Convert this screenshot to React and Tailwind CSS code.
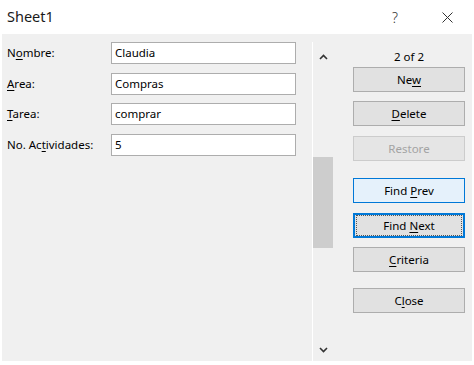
import React from "react";

const font = { fontFamily: '"Noto Sans", "Open Sans", sans-serif' };

function U({ children }) {
  return <span className="underline underline-offset-[2px] decoration-[1px]">{children}</span>;
}

function Field({ label, value }) {
  return (
    <div className="flex items-center h-[22px]">
      <div className="w-[104px] text-[11.5px] text-black leading-none">{label}</div>
      <div className="w-[185px] h-[22px] bg-white border border-[#adadad] flex items-center pl-[3px] text-[11.5px] text-black">
        {value}
      </div>
    </div>
  );
}

function Btn({ children, variant = "normal", className = "" }) {
  let cls = "bg-[#e1e1e1] border border-[#adadad] text-black";
  if (variant === "disabled") cls = "bg-[#e5e5e5] border border-[#cccccc] text-[#a3a3a3]";
  if (variant === "hover") cls = "bg-[#e5f1fb] border border-[#0078d7] text-black";
  if (variant === "focus") cls = "bg-[#e1e1e1] border-2 border-[#0078d7] text-black";
  return (
    <div className={`w-[112px] h-[25px] flex items-center justify-center text-[11.5px] ${cls} ${className}`}>
      {variant === "focus" ? (
        <div className="w-full h-full m-[1px] border border-dotted border-[#555] flex items-center justify-center">
          <span>{children}</span>
        </div>
      ) : (
        <span>{children}</span>
      )}
    </div>
  );
}

export default function App() {
  return (
    <div className="w-[474px] h-[365px] bg-white flex flex-col" style={font}>
      <div className="h-[34px] flex items-center pl-[7px] pr-[21px] shrink-0">
        <div className="text-[14.5px] text-[#1a1a1a] flex-1">Sheet1</div>
        <div className="text-[14px] text-[#333] mr-[44px] font-light">?</div>
        <svg width="11" height="11" viewBox="0 0 11 11" className="mt-[1px]">
          <path d="M0.5 0.5 L10.5 10.5 M10.5 0.5 L0.5 10.5" stroke="#333" strokeWidth="1" fill="none" />
        </svg>
      </div>
      <div className="mx-[2px] h-[327px] bg-[#f0f0f0] flex">
        <div className="w-[310px] pl-[5px] pt-[8px] flex flex-col gap-y-[8.5px]">
          <Field label={<>N<U>o</U>mbre:</>} value="Claudia" />
          <Field label={<><U>A</U>rea:</>} value="Compras" />
          <Field label={<><U>T</U>area:</>} value="comprar" />
          <Field label={<>No. Ac<U>t</U>ividades:</>} value="5" />
        </div>
        <div className="mt-[8px] w-[22px] h-[319px] border-l border-white flex flex-col items-center">
          <div className="h-[30px] flex items-center justify-center w-full">
            <svg width="9" height="6" viewBox="0 0 9 6">
              <path d="M1 5 L4.5 1.5 L8 5" stroke="#333" strokeWidth="1.6" fill="none" />
            </svg>
          </div>
          <div className="w-full mt-[85px]">
            <div className="w-[20px] h-[91px] bg-[#cdcdcd]" />
          </div>
          <div className="flex-1" />
          <div className="h-[14px] flex items-start justify-center w-full">
            <svg width="9" height="6" viewBox="0 0 9 6">
              <path d="M1 1 L4.5 4.5 L8 1" stroke="#333" strokeWidth="1.6" fill="none" />
            </svg>
          </div>
        </div>
        <div className="ml-[19px] flex flex-col">
          <div className="w-[112px] h-[33px] flex items-end justify-center text-[11.5px] text-black pb-[2px]">2 of 2</div>
          <Btn className="mt-[0px]">Ne<U>w</U></Btn>
          <Btn className="mt-[9px]"><U>D</U>elete</Btn>
          <Btn className="mt-[10px]" variant="disabled">Restore</Btn>
          <Btn className="mt-[17px]" variant="hover">Find <U>P</U>rev</Btn>
          <Btn className="mt-[10px]" variant="focus">Find <U>N</U>ext</Btn>
          <Btn className="mt-[9px]"><U>C</U>riteria</Btn>
          <Btn className="mt-[16px]">C<U>l</U>ose</Btn>
        </div>
      </div>
    </div>
  );
}
